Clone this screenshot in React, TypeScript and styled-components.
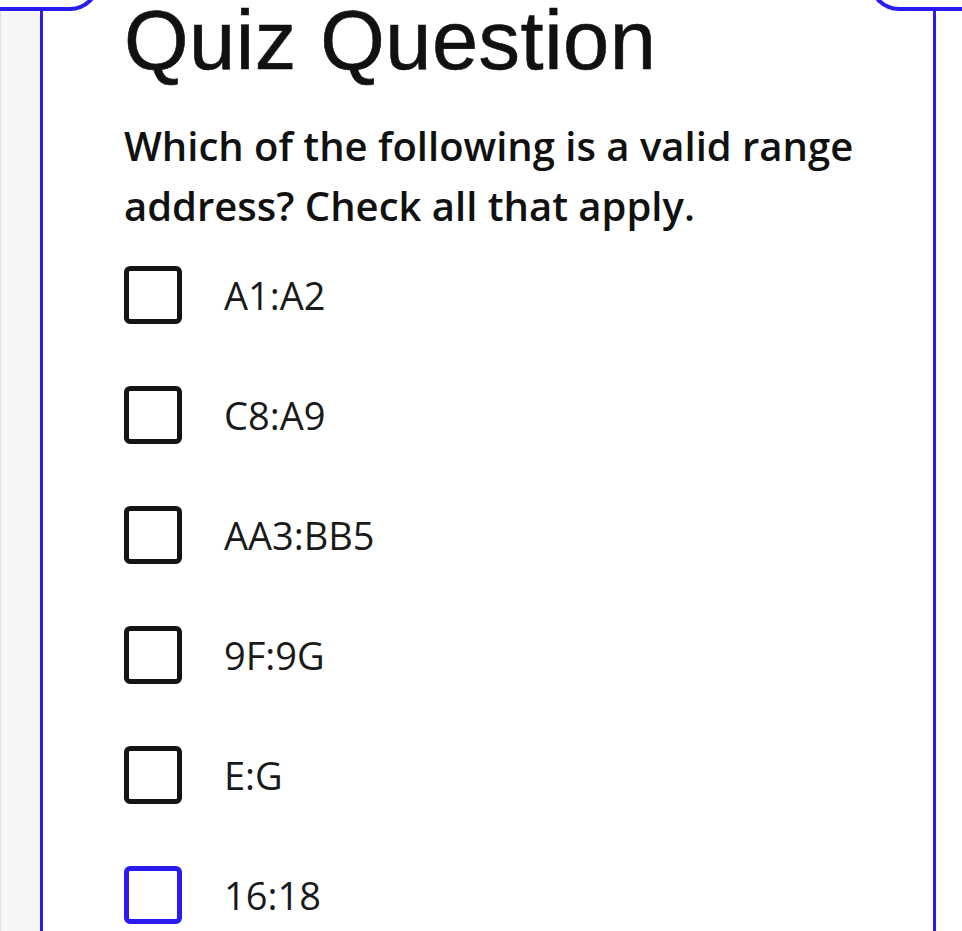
import React from "react";
import styled, { createGlobalStyle } from "styled-components";

const BLUE = "#2a1cf0";

const options = [
	{ key: "a", label: "A1:A2" },
	{ key: "b", label: "C8:A9" },
	{ key: "c", label: "AA3:BB5" },
	{ key: "d", label: "9F:9G" },
	{ key: "e", label: "E:G" },
	{ key: "f", label: "16:18", focused: true },
];

const GlobalStyle = createGlobalStyle`
	html, body {
		margin: 0;
		padding: 0;
		background: #ffffff;
		overflow: hidden;
	}
`;

export default function App() {
	return (
		<>
			<GlobalStyle />
			<Page>
				<TabEdge>
					<LeftTab />
					<RightTab />
				</TabEdge>
				<Body>
					<Gutter />
					<Card>
						<Title>Quiz Question</Title>
						<Prompt>
							Which of the following is a valid range
							<br />
							address? Check all that apply.
						</Prompt>
						<OptionList>
							{options.map((o) => (
								<Option key={o.key}>
									<Box $focused={!!o.focused} />
									<OptionLabel>{o.label}</OptionLabel>
								</Option>
							))}
						</OptionList>
					</Card>
				</Body>
			</Page>
		</>
	);
}

const Page = styled.div`
	width: 962px;
	height: 931px;
	display: flex;
	flex-direction: column;
	overflow: hidden;
`;

const TabEdge = styled.div`
	height: 11px;
	display: flex;
	justify-content: space-between;
	overflow: hidden;
	flex-shrink: 0;
`;

const LeftTab = styled.div`
	width: 100px;
	height: 44px;
	margin-top: -33px;
	box-sizing: border-box;
	border: 4px solid ${BLUE};
	border-left: none;
	border-bottom-right-radius: 30px;
`;

const RightTab = styled.div`
	width: 93px;
	height: 44px;
	margin-top: -33px;
	box-sizing: border-box;
	border: 4px solid ${BLUE};
	border-right: none;
	border-bottom-left-radius: 30px;
`;

const Body = styled.div`
	flex: 1;
	display: flex;
`;

const Gutter = styled.div`
	width: 40px;
	background: #f6f6f6;
	border-left: 1px solid #e2e2e2;
	box-sizing: border-box;
`;

const Card = styled.div`
	width: 896px;
	box-sizing: border-box;
	border-left: 3px solid ${BLUE};
	border-right: 3px solid ${BLUE};
	background: #ffffff;
	padding: 0 0 0 81px;
	color: #111111;
`;

const Title = styled.h1`
	margin: -11px 0 0;
	font-family: "Liberation Sans", Arial, sans-serif;
	font-weight: 400;
	font-size: 83px;
	line-height: 82px;
	letter-spacing: 0.5px;
	-webkit-text-stroke: 0.6px #111111;
`;

const Prompt = styled.p`
	margin: 34px 0 0;
	font-family: "Open Sans", "Noto Sans", sans-serif;
	font-weight: 600;
	font-size: 40px;
	line-height: 60px;
`;

const OptionList = styled.div`
	margin-top: 30px;
	display: flex;
	flex-direction: column;
	gap: 62px;
`;

const Option = styled.label`
	display: flex;
	align-items: center;
	gap: 42px;
	height: 58px;
`;

const Box = styled.span<{ $focused: boolean }>`
	width: 58px;
	height: 58px;
	box-sizing: border-box;
	border: 5px solid ${(p) => (p.$focused ? BLUE : "#141414")};
	border-radius: 6px;
	background: #ffffff;
`;

const OptionLabel = styled.span`
	font-family: "Open Sans", "Noto Sans", sans-serif;
	font-weight: 400;
	font-size: 38px;
	color: #1a1a1a;
`;
